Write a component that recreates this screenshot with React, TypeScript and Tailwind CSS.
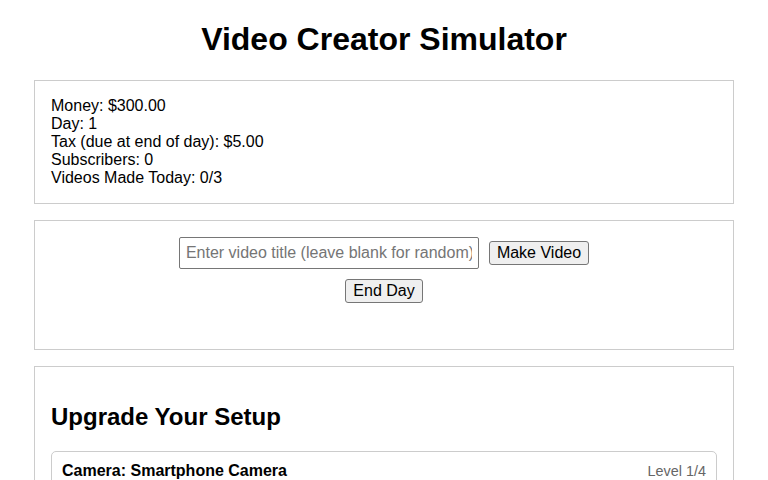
export default function App() {
  const stats = [
    "Money: $300.00",
    "Day: 1",
    "Tax (due at end of day): $5.00",
    "Subscribers: 0",
    "Videos Made Today: 0/3",
  ];

  return (
    <div className="min-h-screen bg-white text-black font-['Liberation_Sans',Arial,sans-serif]">
      <div className="mx-auto w-[700px]">
        <h1 className="text-center text-[32px] font-bold leading-[1.15] pt-[21px] pb-[22px]">
          Video Creator Simulator
        </h1>

        {/* stats */}
        <div className="border border-[#ccc] p-4 mb-4 text-base leading-[18px]">
          {stats.map((s) => (
            <div key={s}>{s}</div>
          ))}
        </div>

        {/* actions */}
        <div className="border border-[#ccc] px-4 pt-4 pb-[46px] mb-4">
          <div className="flex items-center justify-center gap-2.5">
            <input
              type="text"
              placeholder="Enter video title (leave blank for random)"
              className="w-[300px] h-8 border border-[#767676] rounded-[2px] px-[6px] text-base text-black placeholder:text-[#757575] outline-none"
            />
            <button className="h-6 px-[7px] text-base leading-none bg-[#efefef] border border-[#767676] rounded-[3px]">
              Make Video
            </button>
          </div>
          <div className="flex justify-center mt-2.5">
            <button className="h-6 px-[7px] text-base leading-none bg-[#efefef] border border-[#767676] rounded-[3px]">
              End Day
            </button>
          </div>
        </div>

        {/* upgrades */}
        <div className="border border-[#ccc] p-4">
          <h2 className="text-2xl font-bold leading-[1.15] mt-5 mb-[21px]">Upgrade Your Setup</h2>
          <div className="border border-[#ccc] rounded-[5px] px-2.5 py-[7px] mb-2.5">
            <div className="flex justify-between items-center leading-[1.15]">
              <span className="font-bold text-base">Camera: Smartphone Camera</span>
              <span className="text-[14.4px] text-[#666]">Level 1/4</span>
            </div>
            <div className="h-16" />
          </div>
        </div>
      </div>
    </div>
  );
}
